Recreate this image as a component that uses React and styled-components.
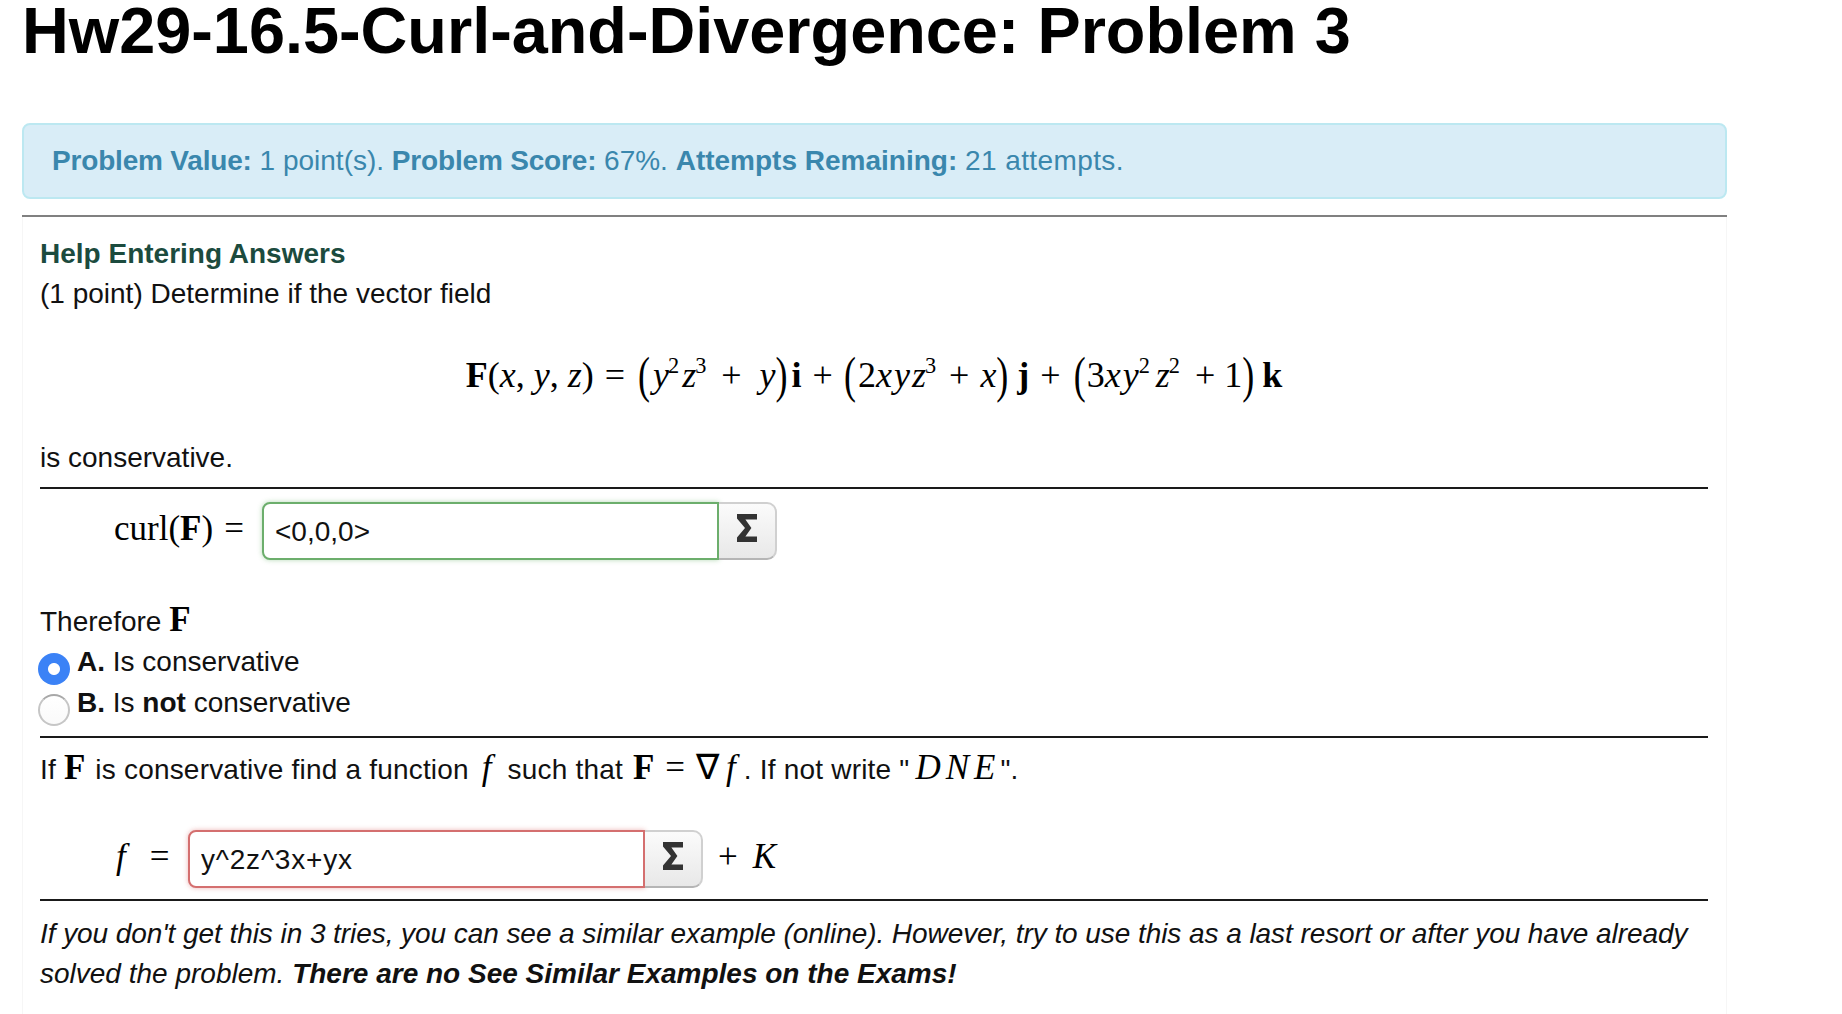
import React from "react";
import styled, { createGlobalStyle } from "styled-components";

const GlobalStyle = createGlobalStyle`
  html, body {
    margin: 0;
    background: #fff;
    overflow: hidden;
  }
  * {
    box-sizing: border-box;
  }
`;

const Page = styled.div`
  height: 1014px;
  padding: 0 115px 0 22px;
  display: flex;
  flex-direction: column;
  font-family: "Liberation Sans", Arial, sans-serif;
  font-size: 28px;
  line-height: 40px;
  color: #111;
`;

const Title = styled.h2`
  margin: 0 0 61px;
  font-size: 64.8px;
  line-height: 62px;
  font-weight: bold;
  color: #000;
`;

const Alert = styled.div`
  height: 76px;
  padding: 16px 70px 16px 28px;
  background: #d9edf7;
  border: 2px solid #bce8f1;
  border-radius: 8px;
  color: #3a87ad;
`;

const AlertLabel = styled.b`
  letter-spacing: -0.18px;
`;

const AlertTail = styled.span`
  letter-spacing: 0.4px;
`;

const TopRule = styled.hr`
  margin: 16px 0 0;
  border: 0;
  height: 2px;
  background: #808080;
`;

const Panel = styled.div`
  flex: 1;
  padding: 17px 18px 0 17px;
  background: #fff;
  border-left: 1px solid #f6f6f6;
  border-right: 1px solid #f6f6f6;
`;

const HelpLink = styled.div`
  font-weight: bold;
  color: #1c4b3e;
`;

const Line = styled.div`
  margin-top: ${(p) => p.$top || 0}px;
  letter-spacing: ${(p) => p.$spacing || 0}px;
`;

const Rule = styled.hr`
  margin: ${(p) => p.$top}px 0 0;
  border: 0;
  height: 2px;
  background: #1a1a1a;
`;

const Math = styled.span`
  font-family: "Liberation Serif", "Times New Roman", serif;
  font-size: ${(p) => p.$size || 35}px;
  letter-spacing: 0;
  color: #000;
`;

const Equation = styled.div`
  height: 124px;
  padding-top: 31px;
  line-height: 60px;
  text-align: center;
  white-space: nowrap;
`;

const Bf = styled.b`
  font-weight: bold;
  margin-left: ${(p) => p.$left || 0}px;
  margin-right: ${(p) => p.$right || 0}px;
`;

const It = styled.i`
  font-style: italic;
  margin-left: ${(p) => p.$left || 0}px;
  margin-right: ${(p) => p.$right || 0}px;
`;

const Capitals = styled.i`
  font-style: italic;
  letter-spacing: 5px;
  margin-left: 6px;
`;

const Sup = styled.sup`
  font-size: 0.62em;
  line-height: 0;
  vertical-align: 0.62em;
  margin-left: -1px;
  margin-right: ${(p) => p.$right || 0}px;
`;

const Op = styled.span`
  margin-left: ${(p) => p.$left ?? 11}px;
  margin-right: ${(p) => p.$right ?? 11}px;
`;

const BigParen = styled.span`
  display: inline-block;
  font-size: 36px;
  line-height: 1;
  transform: scaleY(1.4);
  margin-left: ${(p) => p.$left || 0}px;
  margin-right: ${(p) => p.$right || 0}px;
`;

const AnswerRow = styled.div`
  margin-top: ${(p) => p.$top}px;
  padding-left: 74px;
  display: flex;
  align-items: center;
  height: 58px;
`;

const AnswerLabel = styled.span`
  flex: none;
  width: ${(p) => p.$width}px;
  padding-left: ${(p) => p.$indent || 0}px;
  position: relative;
  top: -1px;
`;

const AnswerInput = styled.input`
  width: ${(p) => p.$width}px;
  height: 58px;
  padding: 2px 11px 0;
  font: 28px "Liberation Sans", Arial, sans-serif;
  letter-spacing: ${(p) => p.$spacing || 0}px;
  color: #111;
  background: #fff;
  border: 2px solid ${(p) => (p.$correct ? "#6cae6c" : "#d46f6f")};
  border-radius: 8px 0 0 8px;
  outline: 0;
  box-shadow: 0 0 5px ${(p) => (p.$correct ? "rgba(92, 170, 92, 0.45)" : "rgba(212, 90, 90, 0.45)")};
`;

const SigmaButton = styled.button`
  width: 58px;
  height: 58px;
  padding: 0 0 7px;
  display: flex;
  align-items: center;
  justify-content: center;
  background: linear-gradient(#fbfbfb, #e8e8e8);
  border: 2px solid #d0d0d0;
  border-left: 0;
  border-bottom-color: #b5b5b5;
  border-radius: 0 10px 10px 0;
`;

const Trailing = styled.span`
  margin-left: 15px;
  position: relative;
  top: -1px;
`;

const ChoiceRow = styled.label`
  display: flex;
  align-items: flex-start;
  height: ${(p) => p.$height}px;
  margin-left: -2px;
`;

const Radio = styled.input.attrs({ type: "radio", readOnly: true })`
  appearance: none;
  flex: none;
  width: 32px;
  height: 32px;
  margin: 11px 7px 0 0;
  border-radius: 50%;
  border: 2px solid #c6c6c6;
  border-top-color: #a8a8a8;
  background: linear-gradient(#fff, #fafafa);

  &:checked {
    border: 0;
    background: radial-gradient(circle, #fff 0 5.5px, #3b82f6 6.5px);
  }
`;

const Tight = styled.span`
  letter-spacing: -0.065px;
`;

const SigmaIcon = () => (
  <svg width="20" height="28" viewBox="0 0 20 28">
    <path fill="#333" d="M0 0H20V5.5H8.4L14.4 14L8.4 22.5H20V28H0V23.6L8 14L0 4.4Z" />
  </svg>
);

const App = () => {
  return (
    <Page>
      <GlobalStyle />
      <Title>Hw29-16.5-Curl-and-Divergence: Problem 3</Title>
      <Alert>
        <AlertLabel>Problem Value:</AlertLabel> 1 point(s). <AlertLabel>Problem Score:</AlertLabel> 67%.{" "}
        <b>Attempts Remaining:</b> <AlertTail>21 attempts.</AlertTail>
      </Alert>
      <TopRule />
      <Panel>
        <HelpLink>Help Entering Answers</HelpLink>
        <Line>(1 point) Determine if the vector field</Line>
        <Equation>
          <Math $size={36}>
            <Bf>F</Bf>(<It>x</It>, <It>y</It>, <It>z</It>)<Op $right={13}>=</Op>
            <BigParen $right={3}>(</BigParen>
            <It>y</It>
            <Sup $right={3}>2</Sup>
            <It>z</It>
            <Sup>3</Sup>
            <Op $left={15} $right={18}>
              +
            </Op>
            <It>y</It>
            <BigParen>)</BigParen>
            <Bf $left={4} $right={6}>
              i
            </Bf>
            <Op $left={5} $right={6}>
              +
            </Op>
            <BigParen $left={5} $right={2}>
              (
            </BigParen>
            2
            <It $right={2}>x</It>
            <It $right={2}>y</It>
            <It>z</It>
            <Sup>3</Sup>
            <Op $left={13}>+</Op>
            <It>x</It>
            <BigParen>)</BigParen>
            <Bf $left={9} $right={6}>
              j
            </Bf>
            <Op $left={5} $right={4}>
              +
            </Op>
            <BigParen $left={9} $right={1}>
              (
            </BigParen>
            3<It $right={2}>x</It>
            <It $right={1}>y</It>
            <Sup $right={6}>2</Sup>
            <It>z</It>
            <Sup>2</Sup>
            <Op $left={15} $right={9}>
              +
            </Op>
            1<BigParen>)</BigParen>
            <Bf $left={8}>k</Bf>
          </Math>
        </Equation>
        <Line>is conservative.</Line>
        <Rule $top={9} />
        <AnswerRow $top={13}>
          <AnswerLabel $width={148}>
            <Math>
              curl(<Bf>F</Bf>)<Op>=</Op>
            </Math>
          </AnswerLabel>
          <AnswerInput $correct $width={457} value="<0,0,0>" readOnly />
          <SigmaButton type="button">
            <SigmaIcon />
          </SigmaButton>
        </AnswerRow>
        <Line $top={40}>
          Therefore{" "}
          <Math>
            <Bf>F</Bf>
          </Math>
        </Line>
        <ChoiceRow $height={41}>
          <Radio name="choice" defaultChecked />
          <span>
            <b>A.</b> Is conservative
          </span>
        </ChoiceRow>
        <ChoiceRow $height={42}>
          <Radio name="choice" />
          <span>
            <b>B.</b> Is <b>not</b> conservative
          </span>
        </ChoiceRow>
        <Rule $top={11} />
        <Line $top={10} $spacing={0.2}>
          If{" "}
          <Math>
            <Bf $right={2}>F</Bf>
          </Math>{" "}
          is conservative find a function{" "}
          <Math>
            <It $left={5} $right={8}>
              f
            </It>
          </Math>{" "}
          such that{" "}
          <Math>
            <Bf $left={2}>F</Bf>
            <Op>=</Op>∇
            <It $left={7} $right={8}>
              f
            </It>
          </Math>
          . If not write "
          <Math>
            <Capitals>DNE</Capitals>
          </Math>
          ".
        </Line>
        <AnswerRow $top={40}>
          <AnswerLabel $width={74} $indent={2}>
            <Math>
              <It>f</It>
              <Op $left={24} $right={0}>
                =
              </Op>
            </Math>
          </AnswerLabel>
          <AnswerInput $width={457} $spacing={0.8} value="y^2z^3x+yx" readOnly />
          <SigmaButton type="button">
            <SigmaIcon />
          </SigmaButton>
          <Trailing>
            <Math>
              +<It $left={15}>K</It>
            </Math>
          </Trailing>
        </AnswerRow>
        <Rule $top={11} />
        <Line $top={13}>
          <i>
            <Tight>
              If you don't get this in 3 tries, you can see a similar example (online). However, try to use this as a
              last resort or after you have already
            </Tight>{" "}
            solved the problem. <b>There are no See Similar Examples on the Exams!</b>
          </i>
        </Line>
      </Panel>
    </Page>
  );
};

export default App;
